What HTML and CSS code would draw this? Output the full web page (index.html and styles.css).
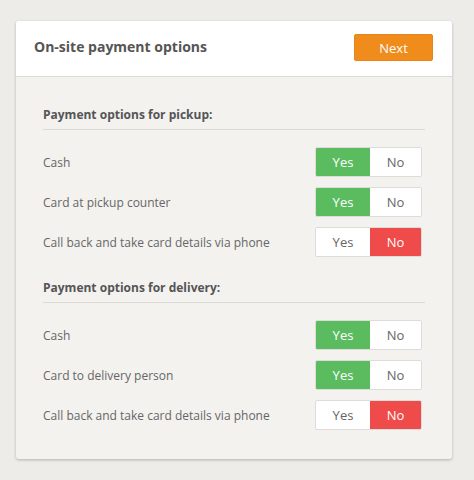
FILE: index.html
```
<!DOCTYPE html>
<html>
<head>
<meta charset="utf-8">
<link rel="stylesheet" href="styles.css">
</head>
<body>
<div class="card">
  <div class="card-header">
    <h1 class="title">On-site payment options</h1>
    <button class="btn-next">Next</button>
  </div>
  <div class="card-body">
    <div class="section">
      <h2 class="section-title">Payment options for pickup:</h2>
      <div class="rows">
        <div class="row"><span class="label">Cash</span><div class="toggle"><span class="opt yes on">Yes</span><span class="opt no">No</span></div></div>
        <div class="row"><span class="label">Card at pickup counter</span><div class="toggle"><span class="opt yes on">Yes</span><span class="opt no">No</span></div></div>
        <div class="row"><span class="label">Call back and take card details via phone</span><div class="toggle"><span class="opt yes">Yes</span><span class="opt no on">No</span></div></div>
      </div>
    </div>
    <div class="section">
      <h2 class="section-title">Payment options for delivery:</h2>
      <div class="rows">
        <div class="row"><span class="label">Cash</span><div class="toggle"><span class="opt yes on">Yes</span><span class="opt no">No</span></div></div>
        <div class="row"><span class="label">Card to delivery person</span><div class="toggle"><span class="opt yes on">Yes</span><span class="opt no">No</span></div></div>
        <div class="row"><span class="label">Call back and take card details via phone</span><div class="toggle"><span class="opt yes">Yes</span><span class="opt no on">No</span></div></div>
      </div>
    </div>
  </div>
</div>
</body>
</html>
```
FILE: styles.css
```
* { box-sizing: border-box; }
html, body { margin: 0; padding: 0; }
body {
  background: #eeece8;
  font-family: "Open Sans", "Liberation Sans", sans-serif;
  width: 474px;
  height: 480px;
  padding: 21px 0 0 16px;
}
.card {
  width: 436px;
  height: 438px;
  background: #f3f2ef;
  border-radius: 3px;
  box-shadow: 0 1px 3px rgba(0,0,0,0.25);
  overflow: hidden;
}
.card-header {
  height: 56px;
  background: #fff;
  border-bottom: 1px solid #dcdad6;
  display: flex;
  align-items: center;
  justify-content: space-between;
  padding: 0 19px 0 18px;
}
.title {
  margin: 0;
  font-size: 14px;
  font-weight: 700;
  color: #555;
  line-height: 20px;
  padding-bottom: 4px;
}
.btn-next {
  width: 79px;
  height: 27px;
  background: #f08c1c;
  border: 1px solid #e8841a;
  border-radius: 2px;
  color: #fff;
  font-family: inherit;
  font-size: 13px;
  padding: 0;
  margin-top: -2px;
}
.card-body {
  padding: 28px 27px 0 27px;
}
.section + .section { margin-top: 21px; }
.section-title {
  margin: 0;
  font-size: 12px;
  font-weight: 700;
  color: #555;
  line-height: 20px;
  padding-bottom: 4px;
  border-bottom: 1px solid #dcdad6;
}
.rows {
  margin-top: 17px;
  display: flex;
  flex-direction: column;
  gap: 10px;
  padding-right: 3px;
}
.row {
  display: flex;
  align-items: center;
  justify-content: space-between;
  height: 30px;
}
.label {
  font-size: 12px;
  color: #666;
}
.toggle {
  display: flex;
  width: 107px;
  height: 30px;
  border: 1px solid #dedcd8;
  border-radius: 2px;
  background: #fff;
  overflow: hidden;
}
.opt {
  display: flex;
  align-items: center;
  justify-content: center;
  font-size: 13px;
  color: #666;
}
.opt.yes { width: 54px; }
.opt.no { flex: 1; }
.opt.yes.on { background: #5bbb5f; color: #fff; }
.opt.no.on { background: #ee4b4a; color: #fff; }
```
